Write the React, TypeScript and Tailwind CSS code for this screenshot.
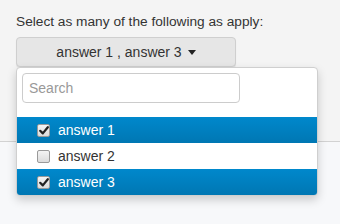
import { useState } from 'react';

const options = [
  { id: 1, label: 'answer 1' },
  { id: 2, label: 'answer 2' },
  { id: 3, label: 'answer 3' },
];

function Check({ on }: { on: boolean }) {
  return (
    <span className="flex h-[13px] w-[13px] items-center justify-center rounded-[2px] border border-[#9a9a9a] bg-gradient-to-b from-[#f4f4f4] to-[#dcdcdc]">
      {on && (
        <svg width="10" height="9" viewBox="0 0 10 9">
          <path d="M1.2 4.8 L3.8 7.4 L8.8 1.2" fill="none" stroke="#222" strokeWidth="2.2" strokeLinecap="round" strokeLinejoin="round" />
        </svg>
      )}
    </span>
  );
}

export default function App() {
  const [selected, setSelected] = useState<number[]>([1, 3]);

  const toggle = (id: number) =>
    setSelected((s) => (s.includes(id) ? s.filter((x) => x !== id) : [...s, id]));

  const summary = options
    .filter((o) => selected.includes(o.id))
    .map((o) => o.label)
    .join(' , ');

  return (
    <div className="relative h-[224px] w-[340px] bg-[#f7f8fa] font-['Liberation_Sans',Arial,sans-serif] text-[#333]">
      <div className="h-[142px] border-b border-[#d2d2d2] bg-[#f4f4f4] px-4 pt-[13px]">
        <p className="text-[13.7px] leading-[17px]">Select as many of the following as apply:</p>
        <button className="mt-[7px] flex h-[30px] w-[220px] items-center justify-center gap-[6px] rounded-[4px] border border-[#cfcfcf] bg-[#e6e6e6] text-[14px] text-[#333] shadow-[0_1px_1px_rgba(0,0,0,0.08)]">
          <span>{summary}</span>
          <svg width="8" height="5" viewBox="0 0 8 5">
            <path d="M0 0 H8 L4 5 Z" fill="#222" />
          </svg>
        </button>
      </div>

      <div className="absolute left-4 top-[67px] w-[302px] overflow-hidden rounded-[4px] border border-[#cfcfcf] bg-white shadow-[0_4px_10px_rgba(0,0,0,0.18)]">
        <div className="px-[5px] pt-[5px]">
          <input
            placeholder="Search"
            className="h-[30px] w-[218px] rounded-[4px] border border-[#ccc] px-[6px] text-[14px] text-[#555] placeholder:text-[#999] outline-none"
          />
        </div>
        <div className="mt-[14px]">
          {options.map((o) => {
            const on = selected.includes(o.id);
            return (
              <div
                key={o.id}
                onClick={() => toggle(o.id)}
                className={
                  on
                    ? 'flex h-[26px] cursor-pointer items-center gap-[8px] bg-gradient-to-b from-[#0088cc] to-[#0077b3] pl-[20px] text-[14px] text-white'
                    : 'flex h-[26px] cursor-pointer items-center gap-[8px] bg-white pl-[20px] text-[14px] text-[#333]'
                }
              >
                <Check on={on} />
                <span>{o.label}</span>
              </div>
            );
          })}
        </div>
      </div>
    </div>
  );
}
